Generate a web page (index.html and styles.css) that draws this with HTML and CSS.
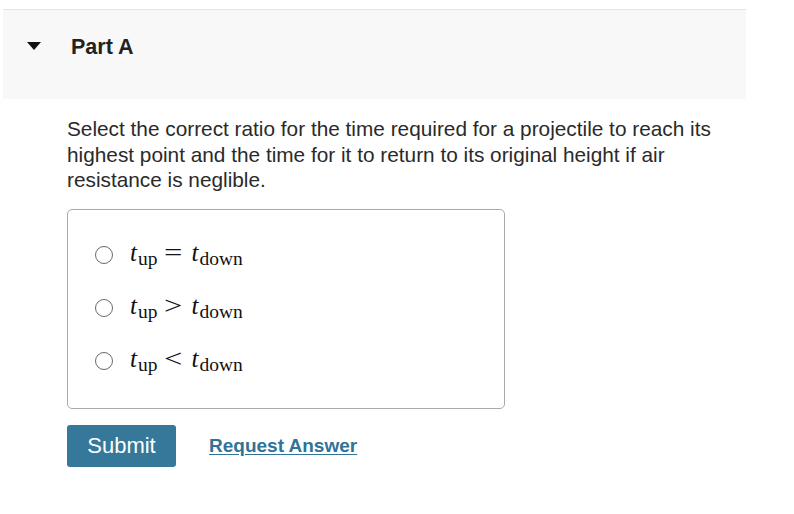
FILE: index.html
```html
<!DOCTYPE html>
<html>
<head>
<meta charset="utf-8">
<link rel="stylesheet" href="styles.css">
</head>
<body>
<div class="part">
  <div class="part-header">
    <span class="caret"></span>
    <h2 class="part-title">Part A</h2>
  </div>
  <div class="part-body">
    <p class="prompt">Select the correct ratio for the time required for a projectile to reach its highest point and the time for it to return to its original height if air resistance is neglible.</p>
    <div class="choices">
      <label class="choice"><span class="radio"></span><span class="math"><i>t</i><sub>up</sub><span class="op">=</span><i>t</i><sub>down</sub></span></label>
      <label class="choice"><span class="radio"></span><span class="math"><i>t</i><sub>up</sub><span class="op">&gt;</span><i>t</i><sub>down</sub></span></label>
      <label class="choice"><span class="radio"></span><span class="math"><i>t</i><sub>up</sub><span class="op">&lt;</span><i>t</i><sub>down</sub></span></label>
    </div>
    <div class="actions">
      <button class="submit">Submit</button>
      <a class="request" href="#">Request Answer</a>
    </div>
  </div>
</div>
</body>
</html>
```
FILE: styles.css
```css
html, body {
  margin: 0;
  padding: 0;
  background: #fff;
}
body {
  font-family: "Liberation Sans", Arial, sans-serif;
  color: #222;
}
.part {
  margin: 9px 0 0 3px;
  width: 743px;
}
.part-header {
  border-top: 1px solid #e4e4e4;
  background: #f8f8f8;
  height: 90px;
  display: flex;
  align-items: flex-start;
  padding-left: 24px;
  box-sizing: border-box;
  padding-top: 25px;
}
.caret {
  width: 0;
  height: 0;
  border-left: 7px solid transparent;
  border-right: 7px solid transparent;
  border-top: 8px solid #111;
  margin-top: 7px;
}
.part-title {
  margin: 0 0 0 30px;
  font-size: 21.5px;
  line-height: 25px;
  font-weight: bold;
  color: #222;
}
.part-body {
  padding-left: 64px;
}
.prompt {
  margin: 17px 0 0 0;
  width: 660px;
  font-size: 20.8px;
  line-height: 25.5px;
  color: #2a2a2a;
}
.choices {
  margin-top: 16px;
  width: 438px;
  height: 200px;
  box-sizing: border-box;
  border: 1px solid #aaa;
  border-radius: 5px;
  padding: 19px 0 0 27px;
  display: flex;
  flex-direction: column;
}
.choice {
  height: 53px;
  display: flex;
  align-items: center;
}
.radio {
  width: 18px;
  height: 18px;
  box-sizing: border-box;
  border: 1.7px solid #6a6a6a;
  border-radius: 50%;
  flex: none;
}
.math {
  margin-left: 17px;
  font-family: "Liberation Serif", "Times New Roman", serif;
  font-size: 25px;
  color: #111;
  white-space: nowrap;
  position: relative;
  top: -2px;
}
.math i {
  font-style: italic;
}
.math sub {
  font-size: 19.5px;
  vertical-align: -4px;
  line-height: 0;
  margin-left: 1px;
}
.op {
  margin: 0 11px 0 9px;
  font-size: 25px;
  display: inline-block;
  transform: scaleX(1.3);
}
.actions {
  margin-top: 16px;
  display: flex;
  align-items: center;
}
.submit {
  width: 109px;
  height: 42px;
  background: #357899;
  color: #fff;
  border: none;
  border-radius: 3px;
  font-family: "Liberation Sans", Arial, sans-serif;
  font-size: 22px;
  padding: 0;
}
.request {
  margin-left: 33px;
  color: #2f7399;
  font-weight: bold;
  font-size: 19px;
  text-decoration: underline;
  text-underline-offset: 2px;
}
```
